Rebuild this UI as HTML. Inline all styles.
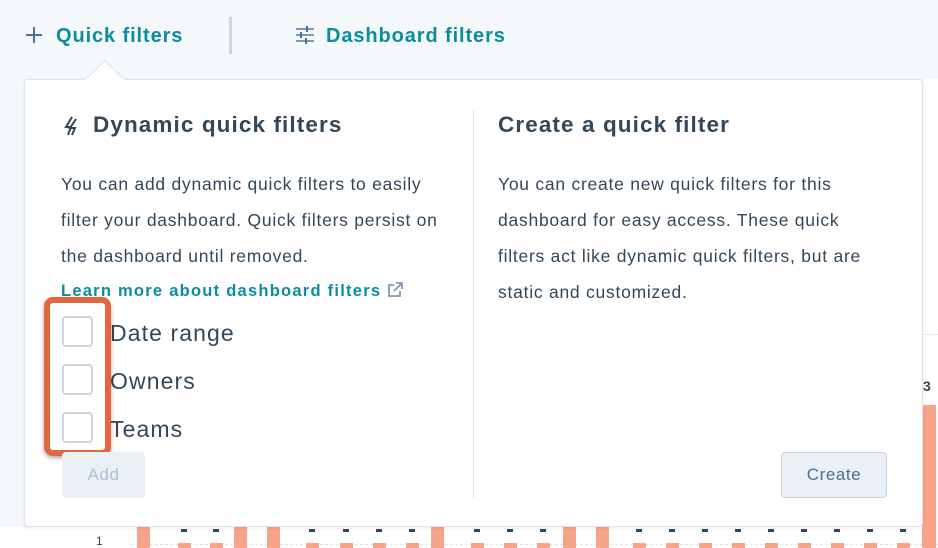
<!DOCTYPE html>
<html><head><meta charset="utf-8"><style>
*{margin:0;padding:0;box-sizing:border-box}
body{width:938px;height:548px;overflow:hidden;background:#f5f8fa;font-family:"Liberation Sans",sans-serif;color:#33475b;position:relative}
.abs{position:absolute}
.tab{font-weight:bold;font-size:20px;color:#0b8da0;top:25px;letter-spacing:0.9px}
.panel{left:24px;top:79px;width:899px;height:448px;background:#fff;border:1px solid #dfe3eb;border-radius:4px;box-shadow:0 1px 4px rgba(0,0,0,.08)}
h2{position:absolute;font-size:22.5px;font-weight:bold;color:#33475b;white-space:nowrap;letter-spacing:1.1px}
.p{position:absolute;font-size:17.5px;line-height:36px;white-space:nowrap;color:#33475b;letter-spacing:0.75px}
.cb{position:absolute;left:62px;width:31px;height:31px;border:2px solid #cbd6e2;border-radius:4px;background:#fff}
.lbl{position:absolute;left:110px;font-size:23px;color:#33475b;letter-spacing:1.1px}
.btn{position:absolute;border-radius:4px;font-size:17px;text-align:center;line-height:46px;letter-spacing:0.6px}
</style></head><body>
<div class="abs" style="left:0;top:527px;width:938px;height:21px;background:#fff"></div>
<div class="abs" style="left:130px;top:544px;width:808px;border-top:1px dashed #dfe3eb"></div>
<div class="abs" style="left:96px;top:534px;font-size:12px;color:#33475b">1</div>
<div class="abs" style="left:923px;top:79px;width:15px;height:448px;background:#fff"></div>
<div class="abs" style="left:923px;top:334px;width:15px;border-top:1px dashed #dfe3eb"></div>
<div class="abs" style="left:923px;top:378px;font-size:14px;font-weight:bold">3</div>
<div class="abs" style="left:922px;top:405px;width:14px;height:143px;background:#f8a48a"></div>
<div id="bars"></div>
<script>
var t=[137,234,267,431,563,596],s=[178,210,306,340,373,406,471,504,537,633,666,699,732,765,798,831,864,897],h='';
t.forEach(x=>h+='<div class="abs" style="left:'+x+'px;top:527px;width:13px;height:21px;background:#f8a48a"></div>');
s.forEach(x=>h+='<div class="abs" style="left:'+x+'px;top:543px;width:13px;height:5px;background:#f8a48a"></div><div class="abs" style="left:'+(x+3)+'px;top:529px;width:6px;height:3px;background:#33475b"></div>');
document.getElementById('bars').innerHTML=h;
</script>
<svg class="abs" style="left:25px;top:26px" width="18" height="18"><path d="M9 1v16M1 9h16" stroke="#516f90" stroke-width="2"/></svg>
<div class="abs tab" style="left:56px">Quick filters</div>
<div class="abs" style="left:229px;top:17px;width:3px;height:37px;background:#cbd6e2"></div>
<svg class="abs" style="left:295px;top:26px" width="20" height="18"><g stroke="#7c98b6" stroke-width="2"><path d="M1 3h18M1 9h18M1 15h18"/></g><g stroke="#516f90" stroke-width="2"><path d="M12 0v6M6 6v6M11 12v6"/></g></svg>
<div class="abs tab" style="left:326px">Dashboard filters</div>
<div class="abs panel"></div>
<svg class="abs" style="left:85px;top:60px" width="40" height="21"><path d="M0 20L20 1L40 20" fill="#fff" stroke="#dfe3eb"/></svg>
<div class="abs" style="left:86px;top:78px;width:38px;height:4px;background:#fff"></div>
<div class="abs" style="left:473px;top:110px;width:1px;height:388px;background:#dfe3eb"></div>
<svg class="abs" style="left:64px;top:116px" width="14" height="20"><path d="M8 1L2 11h5l-3 8M12 3L6 12h5l-3 7" stroke="#33475b" stroke-width="2" fill="none"/></svg>
<h2 style="left:93px;top:112px">Dynamic quick filters</h2>
<div class="p" style="left:61px;top:166px">You can add dynamic quick filters to easily<br>filter your dashboard. Quick filters persist on<br>the dashboard until removed.</div>
<div class="abs" style="left:61px;top:282px;font-size:16.5px;font-weight:bold;color:#0b8da0;white-space:nowrap;letter-spacing:1.25px">Learn more about dashboard filters<svg style="margin-left:6px;vertical-align:-2px" width="16" height="16"><path d="M7 3H2v11h11V9M9 1h6v6M15 1L7 9" stroke="#7c98b6" stroke-width="1.8" fill="none"/></svg></div>
<div class="cb" style="top:316px"></div><div class="lbl" style="top:320px">Date range</div>
<div class="cb" style="top:364px"></div><div class="lbl" style="top:368px">Owners</div>
<div class="cb" style="top:412px"></div><div class="lbl" style="top:416px">Teams</div>
<div class="abs" style="left:44px;top:297px;width:67px;height:159px;border:6px solid #e0673f;border-radius:9px;box-shadow:0 2px 4px rgba(0,0,0,.35)"></div>
<div class="btn" style="left:62px;top:452px;width:83px;height:46px;background:#eaf0f6;color:#b0c1d4">Add</div>
<h2 style="left:498px;top:112px">Create a quick filter</h2>
<div class="p" style="left:498px;top:166px">You can create new quick filters for this<br>dashboard for easy access. These quick<br>filters act like dynamic quick filters, but are<br>static and customized.</div>
<div class="btn" style="left:781px;top:452px;width:106px;height:46px;background:#eaf0f6;border:1px solid #cbd6e2;color:#506e91;line-height:44px">Create</div>
</body></html>
